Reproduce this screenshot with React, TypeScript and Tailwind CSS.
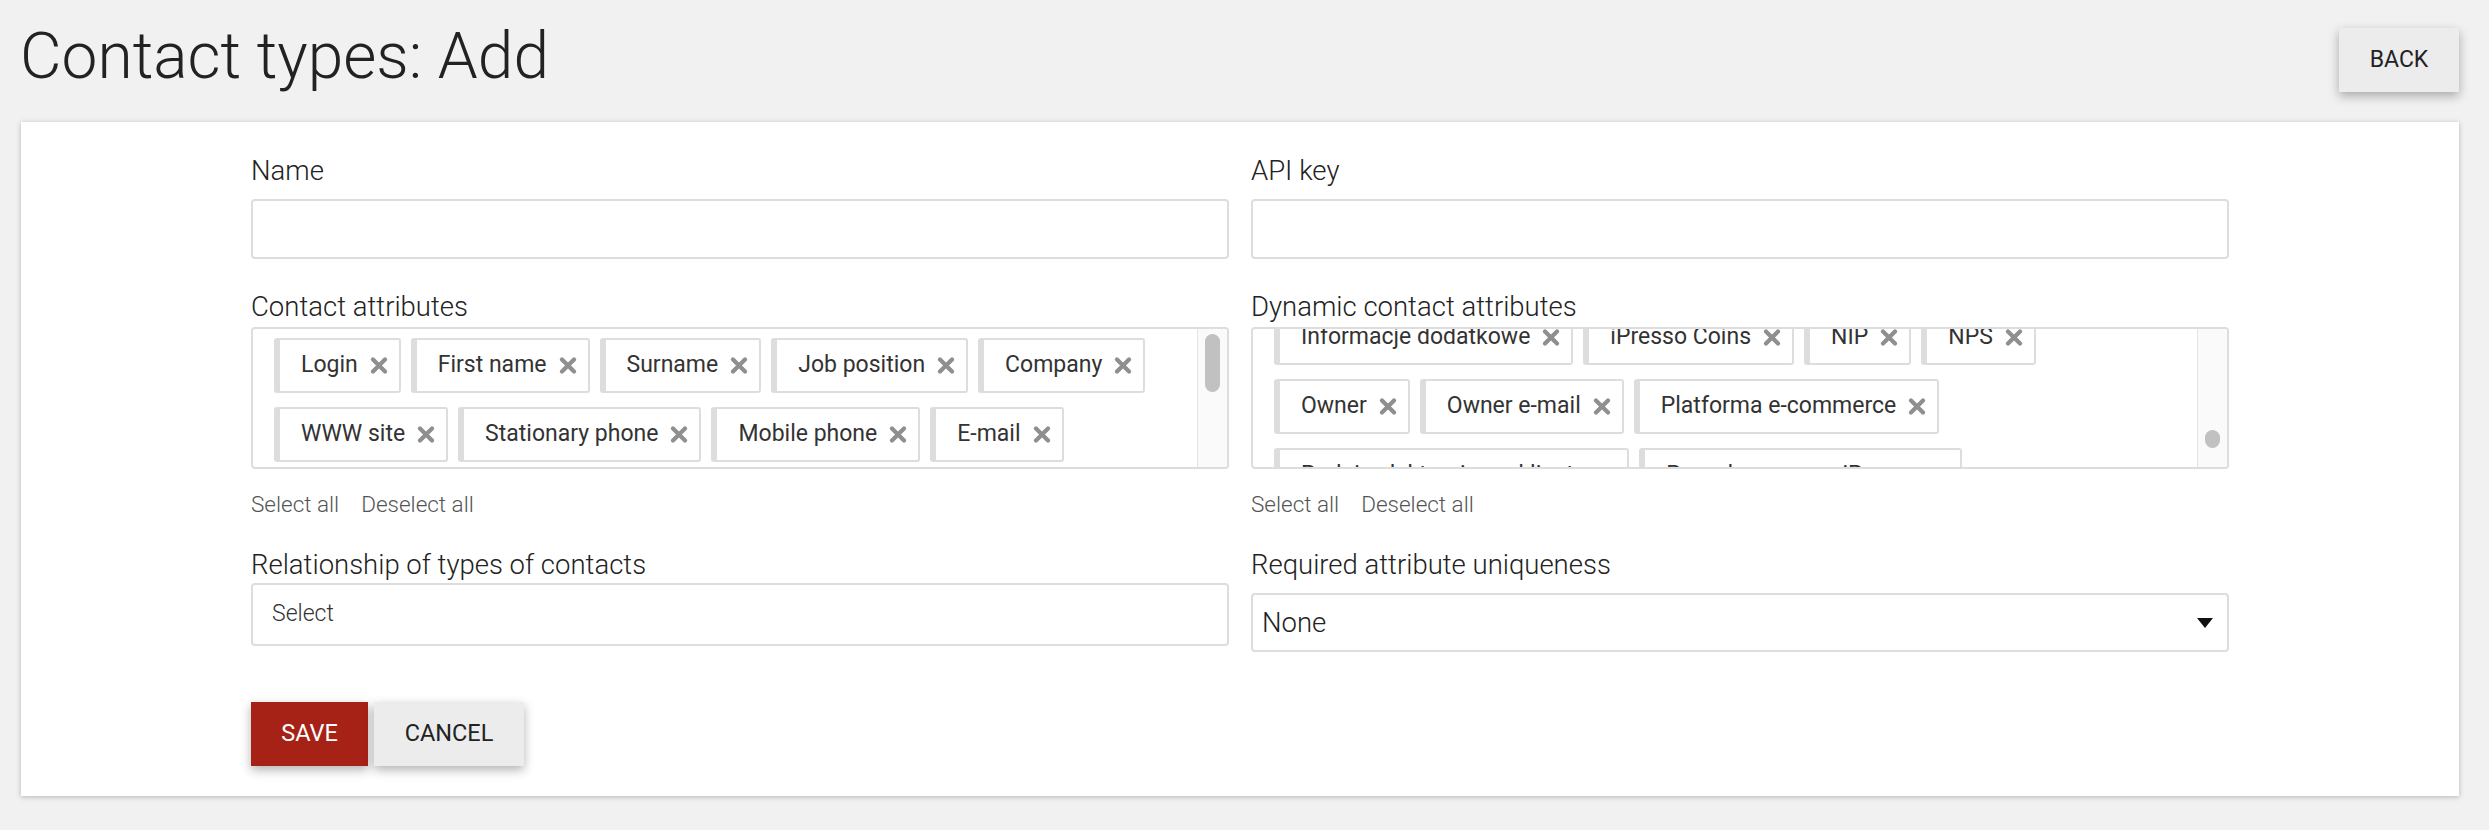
import React from "react";

// Pozycje wybrane w polach z tagami
const contactRows = [
  ["Login", "First name", "Surname", "Job position", "Company"],
  ["WWW site", "Stationary phone", "Mobile phone", "E-mail"],
];

const dynamicRows = [
  ["Informacje dodatkowe", "iPresso Coins", "NIP", "NPS"],
  ["Owner", "Owner e-mail", "Platforma e-commerce"],
  ["Podpis elektroniczny klienta", "Pozyskany przez iPresso"],
];

function XIcon() {
  return (
    <svg width="18" height="17" viewBox="0 0 18 17" className="ml-[12px] shrink-0">
      <path d="M3 2.5 L15 14.5 M15 2.5 L3 14.5" stroke="#8f8f8f" strokeWidth="4.2" strokeLinecap="round" />
    </svg>
  );
}

function Tag({ label }: { label: string }) {
  return (
    <div className="flex items-center h-[55px] shrink-0 bg-white border-2 border-l-[6px] border-[#dddddd] rounded-[3px] pl-[21px] pr-[11px] text-[23px] text-[#333333] whitespace-nowrap">
      <span>{label}</span>
      <XIcon />
    </div>
  );
}

function TagBox({ rows, offset, thumbTop, thumbHeight }: {
  rows: string[][];
  offset: string;
  thumbTop: string;
  thumbHeight: string;
}) {
  return (
    <div className="h-[142px] border-2 border-[#dddddd] rounded-[4px] flex overflow-hidden bg-white">
      <div className="flex-1 overflow-hidden pl-[21px] pt-[9px]">
        <div className={`flex flex-col gap-[14px] ${offset}`}>
          {rows.map((row, i) => (
            <div key={i} className="flex gap-[10px]">
              {row.map((t) => (
                <Tag key={t} label={t} />
              ))}
            </div>
          ))}
        </div>
      </div>
      <div className="w-[30px] bg-[#fafafa] border-l border-[#e3e3e3] flex justify-center">
        <div className={`w-[15px] rounded-full bg-[#c1c1c1] ${thumbTop} ${thumbHeight}`} />
      </div>
    </div>
  );
}

function Label({ children }: { children: React.ReactNode }) {
  return <div className="text-[27.5px] leading-[30px] font-light text-[#222222]">{children}</div>;
}

function SelectLinks() {
  return (
    <div className="mt-[23px] flex gap-[22px] text-[22.5px] leading-[24px] font-light text-[#555555]">
      <span>Select all</span>
      <span>Deselect all</span>
    </div>
  );
}

export default function App() {
  return (
    <div className="min-h-[830px] bg-[#f1f1f1] pl-[21px] pr-[30px] font-[family-name:Roboto,sans-serif]">
      {/* Nagłówek */}
      <div className="flex justify-between items-start pt-[25px]">
        <h1 className="-ml-[1px] text-[64px] leading-[64px] font-light text-[#222222]">Contact types: Add</h1>
        <button className="mt-[3px] w-[120px] h-[64px] bg-[#ececec] text-[23px] text-[#222222] shadow-[0_4px_10px_rgba(0,0,0,0.3)]">
          BACK
        </button>
      </div>

      {/* Formularz */}
      <div className="mt-[30px] bg-white shadow-[0_1px_5px_rgba(0,0,0,0.25)] px-[230px] pt-[34px] pb-[30px]">
        <div className="grid grid-cols-2 gap-x-[22px]">
          <div>
            <Label>Name</Label>
            <input className="mt-[13px] block w-full h-[60px] border-2 border-[#dddddd] rounded-[4px] outline-none" />
          </div>
          <div>
            <Label>API key</Label>
            <input className="mt-[13px] block w-full h-[60px] border-2 border-[#dddddd] rounded-[4px] outline-none" />
          </div>

          <div className="mt-[33px]">
            <Label>Contact attributes</Label>
            <div className="mt-[5px]">
              <TagBox rows={contactRows} offset="mt-0" thumbTop="mt-[5px]" thumbHeight="h-[58px]" />
            </div>
            <SelectLinks />
          </div>
          <div className="mt-[33px]">
            <Label>Dynamic contact attributes</Label>
            <div className="mt-[5px]">
              <TagBox rows={dynamicRows} offset="-mt-[28px]" thumbTop="mt-[101px]" thumbHeight="h-[18px]" />
            </div>
            <SelectLinks />
          </div>

          <div className="mt-[34px]">
            <Label>Relationship of types of contacts</Label>
            <div className="mt-[3px] h-[63px] border-2 border-[#dddddd] rounded-[4px] flex items-center pl-[19px] text-[23px] font-light text-[#333333]">
              Select
            </div>
          </div>
          <div className="mt-[34px]">
            <Label>Required attribute uniqueness</Label>
            <div className="mt-[13px] h-[59px] border-2 border-[#dddddd] rounded-[4px] flex items-center justify-between pl-[9px] pr-[14px] text-[27.5px] font-light text-[#222222]">
              <span>None</span>
              <svg width="16" height="10" viewBox="0 0 16 10">
                <path d="M0 0 H16 L8 10 Z" fill="#111111" />
              </svg>
            </div>
          </div>
        </div>

        <div className="mt-[50px] flex gap-[6px]">
          <button className="w-[117px] h-[64px] bg-[#a72216] text-white text-[23.5px] shadow-[0_4px_10px_rgba(0,0,0,0.3)]">
            SAVE
          </button>
          <button className="w-[150px] h-[64px] bg-[#ececec] text-[#222222] text-[23.5px] shadow-[0_4px_10px_rgba(0,0,0,0.3)]">
            CANCEL
          </button>
        </div>
      </div>
    </div>
  );
}
